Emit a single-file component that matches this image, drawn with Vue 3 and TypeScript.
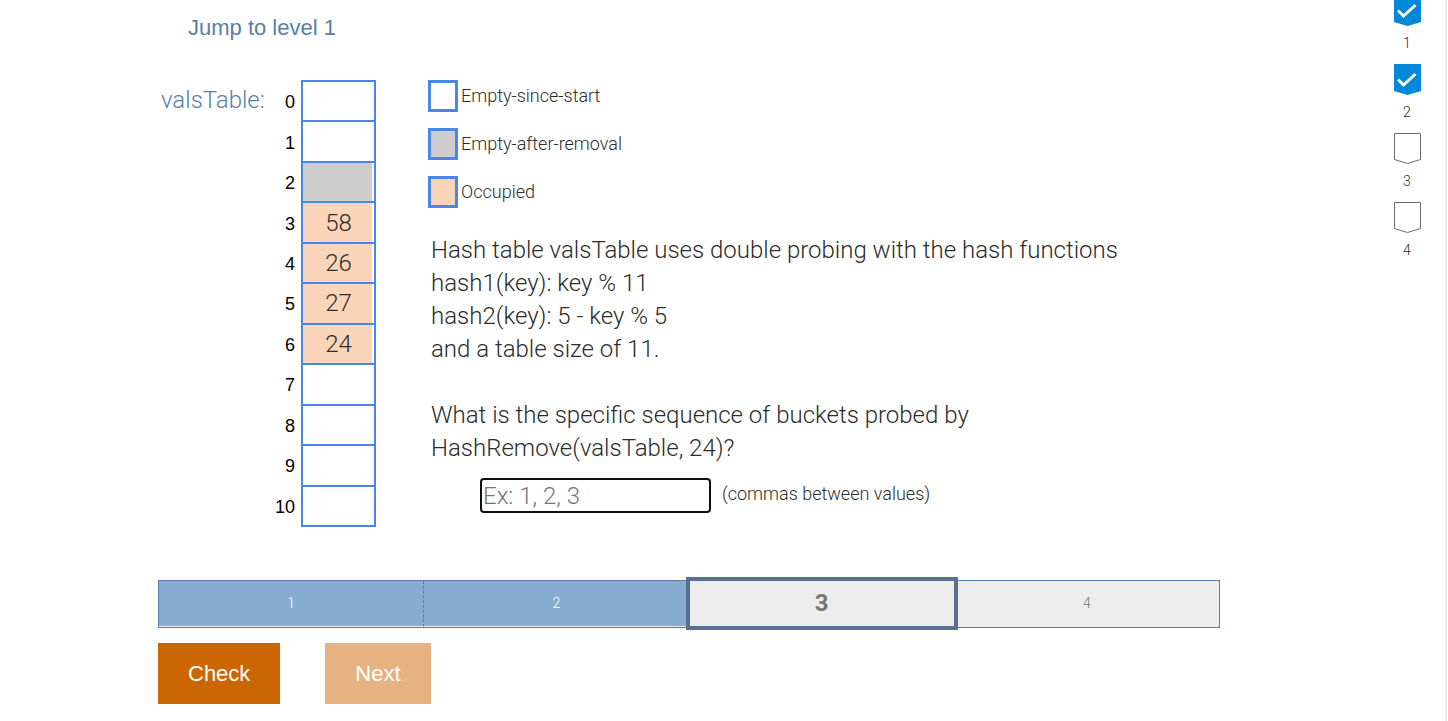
<script setup lang="ts">
import { ref } from 'vue'

type BucketState = 'empty' | 'removed' | 'occupied'

interface Bucket {
  state: BucketState
  value?: number
}

const buckets: Bucket[] = [
  { state: 'empty' },
  { state: 'empty' },
  { state: 'removed' },
  { state: 'occupied', value: 58 },
  { state: 'occupied', value: 26 },
  { state: 'occupied', value: 27 },
  { state: 'occupied', value: 24 },
  { state: 'empty' },
  { state: 'empty' },
  { state: 'empty' },
  { state: 'empty' },
]

const legend: { state: BucketState; label: string }[] = [
  { state: 'empty', label: 'Empty-since-start' },
  { state: 'removed', label: 'Empty-after-removal' },
  { state: 'occupied', label: 'Occupied' },
]

const levels = [1, 2, 3, 4]
const currentLevel = 3
const completed = 2
const answer = ref('')
</script>

<template>
  <div class="page">
    <main class="activity">
      <a class="jump" href="#level-1">Jump to level 1</a>

      <div class="question">
        <span id="table-name" class="table-name">valsTable:</span>
        <table class="buckets" aria-labelledby="table-name">
          <tbody>
            <tr v-for="(bucket, index) in buckets" :key="index">
              <th scope="row">{{ index }}</th>
              <td :class="bucket.state">{{ bucket.value }}</td>
            </tr>
          </tbody>
        </table>

        <div class="details">
          <ul class="legend">
            <li v-for="item in legend" :key="item.state">
              <span class="swatch" :class="item.state"></span>{{ item.label }}
            </li>
          </ul>
          <p>
            Hash table valsTable uses double probing with the hash functions<br />
            hash1(key): key % 11<br />
            hash2(key): 5 - key % 5<br />
            and a table size of 11.
          </p>
          <p>
            What is the specific sequence of buckets probed by<br />
            HashRemove(valsTable, 24)?
          </p>
          <div class="answer">
            <input id="answer" v-model="answer" type="text" placeholder="Ex: 1, 2, 3" />
            <label for="answer">(commas between values)</label>
          </div>
        </div>
      </div>

      <ol class="levels">
        <li
          v-for="level in levels"
          :key="level"
          :class="{ done: level < currentLevel, current: level === currentLevel }"
        >
          {{ level }}
        </li>
      </ol>

      <div class="actions">
        <button type="button" class="check">Check</button>
        <button type="button" class="next" disabled>Next</button>
      </div>
    </main>

    <aside class="rail">
      <div v-for="level in levels" :key="level" class="badge">
        <svg width="27" height="31" viewBox="0 0 27 31" aria-hidden="true">
          <template v-if="level <= completed">
            <path d="M0 0H27V27L13.500 31L0 27Z" fill="#0288d8" />
            <path d="M4 15.500L9.500 21L21.500 10" fill="none" stroke="#fff" stroke-width="3" />
          </template>
          <path v-else d="M.5.5H26.500V26.500L13.500 30.500L.5 26.500Z" fill="#fff" stroke="#6c6c6c" />
        </svg>
        <span>{{ level }}</span>
      </div>
    </aside>
  </div>
</template>

<style>
body {
  background: #fff;
}
</style>

<style scoped>
.page {
  display: flex;
  min-height: 100vh;
  overflow: hidden;
  font-family: Roboto, "Liberation Sans", sans-serif;
  font-weight: 300;
  color: #2c2c2c;
}

.activity {
  flex: 1;
  padding: 12px 149px 0 158px;
}

.jump {
  display: block;
  width: max-content;
  margin-left: 30px;
  font: 400 22px/32px "Liberation Sans", Arial, sans-serif;
  color: #5780a8;
  text-decoration: none;
}

.question {
  display: flex;
  align-items: flex-start;
  margin-top: 36px;
}

.table-name {
  width: 109px;
  padding-left: 3px;
  box-sizing: border-box;
  font-size: 24px;
  line-height: 40px;
  color: #5780a8;
}

.buckets {
  width: 109px;
  height: 447px;
  border-collapse: collapse;
  table-layout: fixed;
}

.buckets th {
  width: 35px;
  padding: 2px 6px 0 0;
  box-sizing: border-box;
  font: 400 18px/20px "Liberation Sans", Arial, sans-serif;
  color: #000;
  text-align: right;
}

.buckets td {
  height: 38px;
  padding: 0;
  border: 2px solid #4a86e8;
  font-size: 24px;
  line-height: 32px;
  text-align: center;
}

.buckets .removed,
.buckets .occupied {
  box-shadow: inset -2px 0 #fff;
}

.removed {
  background: #cdcdcd;
}

.occupied {
  background: #fad5ba;
}

.details {
  flex: 1;
  margin-left: 52px;
}

.legend {
  display: flex;
  flex-direction: column;
  gap: 16px;
  margin: 0 0 26px;
  padding: 0;
  list-style: none;
  font-size: 18px;
}

.legend li {
  display: flex;
  align-items: center;
  gap: 3px;
  line-height: 32px;
}

.swatch {
  width: 30px;
  height: 32px;
  box-sizing: border-box;
  border: 3px solid #4a86e8;
}

.details p {
  margin: 0 0 33px 3px;
  font-size: 24px;
  line-height: 33px;
}

.details .answer {
  display: flex;
  align-items: flex-start;
  gap: 11px;
  margin: -20px 0 0 52px;
  font-size: 18px;
  line-height: 32px;
}

.answer input {
  width: 231px;
  height: 35px;
  box-sizing: border-box;
  padding: 0 1px;
  border: 2px solid #101010;
  border-radius: 4px;
  outline: none;
  background: #fff;
  font: 300 24px/30px Roboto, "Liberation Sans", sans-serif;
  color: #222;
}

.answer input::placeholder {
  color: #757575;
}

.levels {
  display: flex;
  height: 46px;
  margin: 53px 0 0;
  padding: 0;
  border: 1px solid #5780a8;
  background: #ededed;
  list-style: none;
  font-size: 14px;
  line-height: 44px;
  text-align: center;
  color: #777;
}

.levels li {
  flex: 1;
}

.levels .done {
  border-bottom: 1px solid #ededed;
  background: #87acd2;
  color: #fff;
}

.levels .done:first-child {
  border-right: 1px dashed #5780a8;
}

.levels .current {
  margin: -4px -3px -3px;
  border: 4px solid #586f92;
  background: #ededed;
  font-size: 24px;
  font-weight: 700;
}

.actions {
  display: flex;
  gap: 45px;
  margin-top: 15px;
}

.actions button {
  height: 61px;
  padding: 0 30px;
  border: 0;
  background: #cc6600;
  font: 400 22px/32px "Liberation Sans", Arial, sans-serif;
  color: #fff;
}

.actions .next {
  background: #e6b282;
}

.rail {
  width: 76px;
  margin-right: 1px;
  border-right: 2px solid #ececec;
}

.badge {
  display: flex;
  flex-direction: column;
  align-items: center;
  gap: 5px;
  margin-bottom: 9px;
  font-size: 14px;
  line-height: 24px;
}

.badge:first-child {
  margin-top: -5px;
}
</style>
